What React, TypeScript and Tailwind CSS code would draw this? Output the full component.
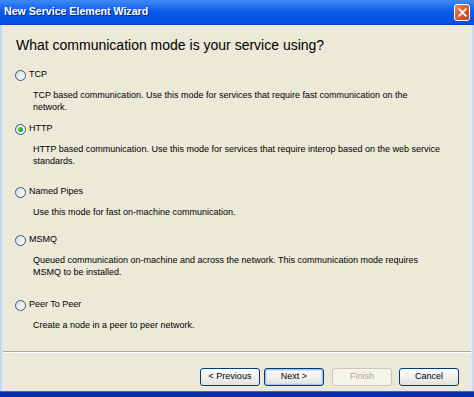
import React from "react";

const options = [
  {
    label: "TCP",
    checked: false,
    desc: ["TCP based communication. Use this mode for services that require fast communication on the", "network."],
    cls: "mt-[16px]",
  },
  {
    label: "HTTP",
    checked: true,
    desc: ["HTTP based communication. Use this mode for services that require interop based on the web service", "standards."],
    cls: "mt-[10px]",
  },
  {
    label: "Named Pipes",
    checked: false,
    desc: ["Use this mode for fast on-machine communication."],
    cls: "mt-[19px]",
  },
  {
    label: "MSMQ",
    checked: false,
    desc: ["Queued communication on-machine and across the network. This communication mode requires", "MSMQ to be installed."],
    cls: "mt-[16px]",
  },
  {
    label: "Peer To Peer",
    checked: false,
    desc: ["Create a node in a peer to peer network."],
    cls: "mt-[21px]",
  },
];

function Radio({ checked }: { checked: boolean }) {
  return (
    <div className="w-[11px] h-[11px] rounded-full border border-[#2A5A8A] bg-gradient-to-br from-[#DCDBD5] to-white flex items-center justify-center shrink-0">
      {checked && <div className="w-[5px] h-[5px] rounded-full bg-gradient-to-br from-[#55D551] to-[#139A13]" />}
    </div>
  );
}

function Btn({ children, kind }: { children: React.ReactNode; kind?: "default" | "disabled" }) {
  if (kind === "disabled") {
    return (
      <div className="w-[60px] h-[18px] rounded-[3px] border border-[#C9C7BA] bg-[#F5F4EA] flex items-center justify-center text-[9px] text-[#ACA899]">
        {children}
      </div>
    );
  }
  return (
    <div
      className={
        kind === "default"
          ? "w-[60px] h-[18px] rounded-[3px] border border-[#003C74] bg-gradient-to-b from-white to-[#E3E3DB] flex items-center justify-center text-[9px] text-black shadow-[inset_0_0_0_1px_#A7C4EE,inset_0_0_0_2px_#CEE0F8]"
          : "w-[60px] h-[18px] rounded-[3px] border border-[#003C74] bg-gradient-to-b from-white to-[#E3E3DB] flex items-center justify-center text-[9px] text-black"
      }
    >
      {children}
    </div>
  );
}

export default function App() {
  return (
    <div
      className="w-[474px] h-[397px] flex flex-col overflow-hidden bg-[#ECE9D8]"
      style={{ fontFamily: '"Liberation Sans", Arial, sans-serif' }}
    >
      {/* Title bar */}
      <div className="h-[25px] shrink-0 flex items-center justify-between pl-[4px] pr-[4px] bg-gradient-to-b from-[#3D8AF7] via-[#0A58E8] to-[#0650E0] border-b border-[#0841C8]">
        <span className="text-white font-bold text-[10.6px] [text-shadow:1px_1px_0_#0A2A8A]">New Service Element Wizard</span>
        <div className="w-[16px] h-[17px] rounded-[3px] border border-white bg-gradient-to-br from-[#F08A65] via-[#E0582C] to-[#C8401A] flex items-center justify-center">
          <svg width="9" height="9" viewBox="0 0 9 9">
            <path d="M1.2 1.2 L7.8 7.8 M7.8 1.2 L1.2 7.8" stroke="white" strokeWidth="1.8" strokeLinecap="round" />
          </svg>
        </div>
      </div>

      {/* Body with frame */}
      <div className="flex-1 flex">
        <div className="w-[3px] bg-gradient-to-r from-[#B9D0F2] to-[#E4EAF2]" />
        <div className="flex-1 flex flex-col">
          <div className="flex-1 flex flex-col pl-[13px] pt-[12px]">
            <div className="text-[14px] leading-[16px] text-black">What communication mode is your service using?</div>
            {options.map((o) => (
              <div key={o.label} className={o.cls}>
                <div className="flex items-center gap-[3px] h-[12px] text-[9px] text-black -ml-[1px]">
                  <Radio checked={o.checked} />
                  <span>{o.label}</span>
                </div>
                <div className="mt-[8px] pl-[17px] text-[9px] leading-[12px] text-black">
                  {o.desc.map((d) => (
                    <div key={d}>{d}</div>
                  ))}
                </div>
              </div>
            ))}
          </div>
          <div className="h-[2px] shrink-0 border-t border-[#ACA899] bg-white" />
          <div className="h-[38px] shrink-0 flex items-start justify-end pr-[12px] pt-[15px]">
            <div className="flex">
              <Btn>&lt; Previous</Btn>
              <div className="ml-[4px]">
                <Btn kind="default">Next &gt;</Btn>
              </div>
              <div className="ml-[8px]">
                <Btn kind="disabled">Finish</Btn>
              </div>
              <div className="ml-[7px]">
                <Btn>Cancel</Btn>
              </div>
            </div>
          </div>
        </div>
        <div className="w-[3px] bg-gradient-to-l from-[#B9D0F2] to-[#E4EAF2]" />
      </div>
      <div className="h-[6px] shrink-0 bg-[#0A2EA8] border-t border-[#3A64D8]" />
    </div>
  );
}
